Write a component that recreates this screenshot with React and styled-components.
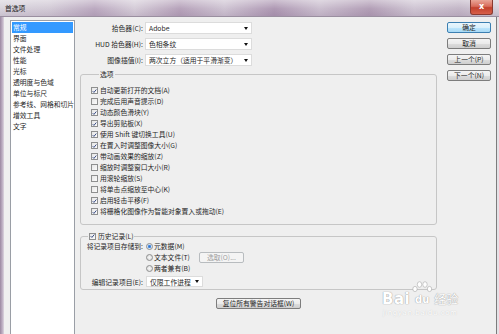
import React from 'react';
import styled, { createGlobalStyle } from 'styled-components';

const GlobalStyle = createGlobalStyle`
  html, body { margin: 0; padding: 0; background: #efefef; }
  body {
    font-family: "Noto Sans CJK SC", "Noto Sans", sans-serif;
    font-size: 6.8px;
    color: #1f1f1f;
  }
  * { box-sizing: border-box; }
`;

const Window = styled.div`
  position: relative;
  width: 499px;
  height: 334px;
  overflow: hidden;
  display: flex;
  flex-direction: column;
  background: #efefef;
`;

const TitleBar = styled.div`
  height: 17px;
  flex: none;
  display: flex;
  justify-content: space-between;
  padding: 0 6px 0 5px;
  border-bottom: 1px solid #9a8fa0;
  background:
    linear-gradient(180deg, rgba(255,255,255,0.4), rgba(255,255,255,0) 55%, rgba(90,60,100,0.12)),
    linear-gradient(90deg, #d8d3dc 0%, #d2cad6 10%, #bba9c0 19%, #d5ccd8 27%, #b6a2ba 36%, #cec3d2 45%, #ae98b3 55%, #cbbfcf 64%, #b29eb6 74%, #cfc5d3 83%, #c3b6c7 92%, #d6cfd9 100%);
`;

const Title = styled.span`
  align-self: center;
  line-height: 10px;
  color: #1a1a1a;
`;

const CloseButton = styled.div`
  width: 23px;
  height: 15px;
  border: 1px solid #8a3a30;
  border-top: none;
  border-radius: 0 0 3px 3px;
  background: linear-gradient(180deg, #e9a597 0%, #d86c5b 45%, #c2402c 55%, #d7604a 100%);
  color: #fff;
  font-family: "DejaVu Sans", sans-serif;
  font-weight: bold;
  font-size: 8px;
  line-height: 13px;
  text-align: center;
`;

const Body = styled.div`
  flex: 1;
  display: flex;
  min-height: 0;
`;

const LeftEdge = styled.div`
  width: 4px;
  flex: none;
  background: linear-gradient(90deg, #9b88a1, #bfb1c4 60%, #ddd6df);
`;

const RightEdge = styled.div`
  width: 3px;
  flex: none;
  border-left: 1px solid #7c7c7c;
  background: #e4e1e6;
`;

const Content = styled.div`
  flex: 1;
  display: flex;
  padding: 3px 5px 0 6px;
  min-width: 0;
`;

const CategoryList = styled.ul`
  width: 65px;
  flex: none;
  margin: 0 0 -3px 0;
  padding: 1px;
  list-style: none;
  background: #fff;
  border: 1px solid #9a9ea6;
`;

const CategoryItem = styled.li`
  height: 11px;
  line-height: 11px;
  padding-left: 1px;
  white-space: nowrap;
  color: ${p => (p.$selected ? '#fff' : '#1f1f1f')};
  background: ${p => (p.$selected ? '#3399ff' : 'transparent')};
`;

const Main = styled.div`
  width: 357px;
  flex: none;
  margin-left: 5px;
  display: flex;
  flex-direction: column;
`;

const FieldGrid = styled.div`
  margin-top: 2px;
  display: grid;
  grid-template-columns: 63px 107px;
  grid-auto-rows: 12px;
  column-gap: 2px;
  row-gap: 4px;
`;

const FieldLabel = styled.span`
  text-align: right;
  line-height: ${p => p.$lh || 12}px;
  white-space: nowrap;
`;

const Select = styled.div`
  display: flex;
  align-items: center;
  justify-content: space-between;
  height: ${p => p.$h || 12}px;
  width: ${p => (p.$w ? `${p.$w}px` : 'auto')};
  padding: 0 3px 0 3px;
  background: #fff;
  border: 1px solid #dcdcdc;
  white-space: nowrap;
  line-height: 10px;
`;

const Arrow = styled.span`
  width: 0;
  height: 0;
  border-left: 2.5px solid transparent;
  border-right: 2.5px solid transparent;
  border-top: 3px solid #111;
  margin-left: 4px;
`;

const Group = styled.fieldset`
  margin: ${p => p.$mt || 0}px 0 0 0;
  padding: ${p => p.$pad};
  border: 1px solid #c6c6c6;
  border-radius: 3px;
  min-width: 0;
`;

const Legend = styled.legend`
  display: flex;
  align-items: center;
  gap: 2px;
  height: 10px;
  line-height: 10px;
  margin-left: ${p => p.$ml}px;
  padding: 0 1px;
`;

const CheckRow = styled.label`
  display: flex;
  align-items: center;
  gap: 2px;
  height: 11px;
  line-height: 11px;
  white-space: nowrap;
`;

const Box = styled.span`
  width: 7px;
  height: 7px;
  flex: none;
  display: flex;
  align-items: center;
  justify-content: center;
  border: 1px solid #8e8f8f;
  background: linear-gradient(135deg, #e6e6e6, #fbfbfb);
`;

const Radio = styled.span`
  width: 7px;
  height: 7px;
  flex: none;
  border-radius: 50%;
  border: 1px solid #8e8f8f;
  background: ${p =>
    p.$on
      ? 'radial-gradient(circle, #2f6fce 0, #4d8fe0 1.3px, #cfe2f7 2px, #f6f6f6 3px)'
      : 'radial-gradient(circle, #f8f8f8 0, #dcdcdc 3px)'};
`;

const Check = ({ on }) => (
  <Box>
    {on && (
      <svg width="6" height="6" viewBox="0 0 6 6">
        <path d="M0.8 3.2 L2.3 4.7 L5.2 1.2" fill="none" stroke="#3c4f86" strokeWidth="1.2" />
      </svg>
    )}
  </Box>
);

const HistoryGrid = styled.div`
  display: grid;
  grid-template-columns: 62px auto;
  column-gap: 3px;
  row-gap: 2px;
  align-items: start;
`;

const RadioStack = styled.div`
  display: flex;
  flex-direction: column;
`;

const RadioRow = styled.div`
  display: flex;
  align-items: center;
  gap: 1px;
  height: 11px;
  line-height: 11px;
  white-space: nowrap;
`;

const Button = styled.button`
  height: 11px;
  width: ${p => (p.$w ? `${p.$w}px` : 'auto')};
  margin: ${p => p.$m || 0};
  padding: 0 5px;
  font: inherit;
  font-size: 6.8px;
  line-height: 9px;
  white-space: nowrap;
  color: ${p => (p.disabled ? '#a0a0a0' : '#1f1f1f')};
  border: 1px solid ${p => (p.$primary ? '#3c7fb1' : p.disabled ? '#b8bcbf' : '#7d7d7d')};
  border-radius: 2px;
  background: ${p =>
    p.$primary
      ? 'linear-gradient(#eaf6fd 0%, #d9f0fc 50%, #bee6fd 51%, #a7d9f5 100%)'
      : p.disabled
      ? '#f4f4f4'
      : 'linear-gradient(#f4f4f4 0%, #ebebeb 50%, #dddddd 51%, #cfcfcf 100%)'};
`;

const ResetButton = styled(Button)`
  align-self: center;
  margin-top: 8px;
  padding: 0 6px;
`;

const ButtonColumn = styled.div`
  width: 44px;
  flex: none;
  margin-left: 10px;
  padding-top: 2px;
  display: flex;
  flex-direction: column;
  gap: 5px;
`;

const Watermark = styled.div`
  position: absolute;
  left: 382px;
  top: 280px;
  display: flex;
  flex-direction: column;
  align-items: center;
  pointer-events: none;
  color: #fff;
  text-shadow: 0 0 1px #9e9e9e, 0 0 1px #aaaaaa;
`;

const LogoRow = styled.div`
  display: flex;
  align-items: flex-end;
`;

const LogoBai = styled.span`
  font-family: "DejaVu Sans", sans-serif;
  font-size: 15px;
  line-height: 16px;
  font-weight: bold;
  letter-spacing: 0.5px;
`;

const Paw = styled.span`
  position: relative;
  width: 24px;
  height: 27px;
  display: flex;
  align-items: flex-end;
  justify-content: center;
  font-family: "DejaVu Sans", sans-serif;
  font-weight: bold;
  font-size: 10px;
  line-height: 14px;
`;

const PawPads = styled.svg`
  position: absolute;
  left: 0;
  top: 0;
`;

const LogoJY = styled.span`
  font-size: 12px;
  line-height: 16px;
`;

const LogoUrl = styled.span`
  margin-top: 2px;
  font-family: "DejaVu Sans", sans-serif;
  font-size: 7px;
  line-height: 8px;
  letter-spacing: 0.6px;
  text-shadow: 0 0 1px #bdbdbd;
`;

const categories = ['常规', '界面', '文件处理', '性能', '光标', '透明度与色域', '单位与标尺', '参考线、网格和切片', '增效工具', '文字'];

const options = [
  ['自动更新打开的文档(A)', true],
  ['完成后用声音提示(D)', false],
  ['动态颜色滑块(Y)', true],
  ['导出剪贴板(X)', true],
  ['使用 Shift 键切换工具(U)', true],
  ['在置入时调整图像大小(G)', true],
  ['带动画效果的缩放(Z)', true],
  ['缩放时调整窗口大小(R)', false],
  ['用滚轮缩放(S)', false],
  ['将单击点缩放至中心(K)', false],
  ['启用轻击平移(F)', true],
  ['将栅格化图像作为智能对象置入或拖动(E)', true],
];

const fields = [
  ['拾色器(C):', 'Adobe'],
  ['HUD 拾色器(H):', '色相条纹'],
  ['图像插值(I):', '两次立方（适用于平滑渐变）'],
];

export default function App() {
  return (
    <>
      <GlobalStyle />
      <Window>
        <TitleBar>
          <Title>首选项</Title>
          <CloseButton>x</CloseButton>
        </TitleBar>
        <Body>
          <LeftEdge />
          <Content>
            <CategoryList>
              {categories.map((c, i) => (
                <CategoryItem key={c} $selected={i === 0}>{c}</CategoryItem>
              ))}
            </CategoryList>
            <Main>
              <FieldGrid>
                {fields.map(([l, v]) => (
                  <React.Fragment key={l}>
                    <FieldLabel>{l}</FieldLabel>
                    <Select>
                      <span>{v}</span>
                      <Arrow />
                    </Select>
                  </React.Fragment>
                ))}
              </FieldGrid>
              <Group $mt={3} $pad="6px 0 7px 10px">
                <Legend $ml={8}>选项</Legend>
                {options.map(([t, on]) => (
                  <CheckRow key={t}>
                    <Check on={on} />
                    <span>{t}</span>
                  </CheckRow>
                ))}
              </Group>
              <Group $mt={6} $pad="0 0 1px 0">
                <Legend $ml={7}>
                  <Check on />
                  <span>历史记录(L)</span>
                </Legend>
                <HistoryGrid>
                  <FieldLabel $lh={11}>将记录项目存储到:</FieldLabel>
                  <RadioStack>
                    <RadioRow>
                      <Radio $on />
                      <span>元数据(M)</span>
                    </RadioRow>
                    <RadioRow>
                      <Radio />
                      <span>文本文件(T)</span>
                      <Button disabled $w={45} $m="0 0 0 8px">选取(O)...</Button>
                    </RadioRow>
                    <RadioRow>
                      <Radio />
                      <span>两者兼有(B)</span>
                    </RadioRow>
                  </RadioStack>
                  <FieldLabel>编辑记录项目(E):</FieldLabel>
                  <Select $w={57} $h={11}>
                    <span>仅限工作进程</span>
                    <Arrow />
                  </Select>
                </HistoryGrid>
              </Group>
              <ResetButton>复位所有警告对话框(W)</ResetButton>
            </Main>
            <ButtonColumn>
              <Button $primary>确定</Button>
              <Button>取消</Button>
              <Button>上一个(P)</Button>
              <Button>下一个(N)</Button>
            </ButtonColumn>
          </Content>
          <RightEdge />
        </Body>
        <Watermark>
          <LogoRow>
            <LogoBai>Bai</LogoBai>
            <Paw>
              <PawPads width="24" height="14" viewBox="0 0 24 14">
                <ellipse cx="5" cy="9" rx="2.2" ry="2.6" fill="#fff" stroke="#aaa" strokeWidth="0.6" />
                <ellipse cx="9.5" cy="4.5" rx="2.2" ry="2.8" fill="#fff" stroke="#aaa" strokeWidth="0.6" />
                <ellipse cx="15" cy="4.5" rx="2.2" ry="2.8" fill="#fff" stroke="#aaa" strokeWidth="0.6" />
                <ellipse cx="19.5" cy="9" rx="2.2" ry="2.6" fill="#fff" stroke="#aaa" strokeWidth="0.6" />
              </PawPads>
              du
            </Paw>
            <LogoJY>经验</LogoJY>
          </LogoRow>
          <LogoUrl>jingyan.baidu.com</LogoUrl>
        </Watermark>
      </Window>
    </>
  );
}
